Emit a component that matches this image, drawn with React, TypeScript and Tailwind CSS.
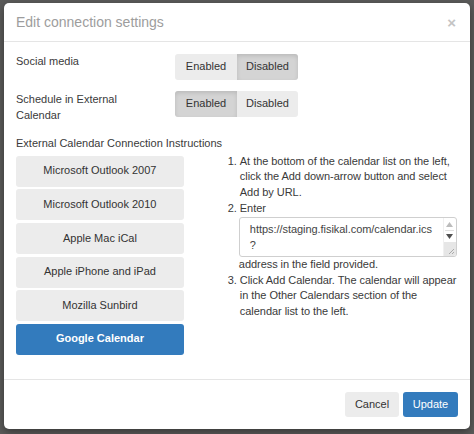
import React from 'react';

const calendars = [
  'Microsoft Outlook 2007',
  'Microsoft Outlook 2010',
  'Apple Mac iCal',
  'Apple iPhone and iPad',
  'Mozilla Sunbird',
];

const Toggle = ({ active }: { active: 'on' | 'off' }) => (
  <div className="flex h-[26px] text-[11px] text-[#333]">
    <div
      className={`w-[62px] flex items-center justify-center rounded-l-[3px] ${
        active === 'on' ? 'bg-[#d4d4d4] shadow-[inset_0_2px_4px_rgba(0,0,0,0.12)]' : 'bg-[#ececec]'
      }`}
    >
      Enabled
    </div>
    <div
      className={`w-[61px] flex items-center justify-center rounded-r-[3px] ${
        active === 'off' ? 'bg-[#d4d4d4] shadow-[inset_0_2px_4px_rgba(0,0,0,0.12)]' : 'bg-[#ececec]'
      }`}
    >
      Disabled
    </div>
  </div>
);

export default function App() {
  return (
    <div className="w-[474px] h-[434px] bg-[#5b5b5a] pt-[3px] px-[4px] font-['Liberation_Sans',Arial,sans-serif]">
      <div className="bg-white rounded-[5px] h-[426px] flex flex-col shadow-[0_3px_9px_rgba(0,0,0,0.4)]">
        {/* header */}
        <div className="h-[39px] pl-[12px] pr-[14px] flex items-center justify-between border-b border-[#e5e5e5]">
          <h4 className="text-[14px] text-[#9d9d9d] pt-[1px]">Edit connection settings</h4>
          <span className="text-[15px] font-bold text-[#c4c4c4] leading-none">×</span>
        </div>

        {/* body */}
        <div className="flex-1 px-[12px] pt-[12px] text-[11px] leading-[15.6px] text-[#3a3a3a]">
          <div className="flex items-start">
            <div className="w-[159px]">Social media</div>
            <Toggle active="off" />
          </div>
          <div className="flex items-start mt-[11px]">
            <div className="w-[159px] pt-[1px]">
              Schedule in External
              <br />
              Calendar
            </div>
            <Toggle active="on" />
          </div>

          <div className="mt-[13px]">External Calendar Connection Instructions</div>

          <div className="flex mt-[2px]">
            <div className="w-[170px] pt-[2px] flex flex-col gap-[2.6px]">
              {calendars.map((c) => (
                <div
                  key={c}
                  className="h-[31px] rounded-[3px] bg-[#ececec] flex items-center justify-center text-[#333]"
                >
                  {c}
                </div>
              ))}
              <div className="h-[31px] rounded-[3px] bg-[#337bbd] flex items-center justify-center text-white font-bold">
                Google Calendar
              </div>
            </div>

            <ol className="ml-[56px] w-[221px] list-decimal list-outside tracking-[-0.05px]">
              <li>At the bottom of the calendar list on the left, click the Add down-arrow button and select Add by URL.</li>
              <li>
                Enter
                <div className="-ml-[1px] mt-[1px] w-[218px] h-[40px] border border-[#cfcfcf] rounded-[3px] flex">
                  <div className="flex-1 pl-[10px] pt-[4px] text-[#444] overflow-hidden whitespace-nowrap">
                    <div>https://staging.fisikal.com/calendar.ics</div>
                    <div>?</div>
                    <div className="text-[#777]">&nbsp;&nbsp;auth_token=ZGI0MTMINzMx</div>
                  </div>
                  <div className="w-[13px] flex flex-col items-center border-l border-[#f0f0f0]">
                    <svg width="7" height="5" viewBox="0 0 7 5" className="mt-[4px]">
                      <path d="M0 5 L3.5 0 L7 5 Z" fill="#bcbcbc" />
                    </svg>
                    <div className="w-[9px] h-px bg-[#e0e0e0] mt-[3px]" />
                    <svg width="7" height="5" viewBox="0 0 7 5" className="mt-[3px]">
                      <path d="M0 0 L3.5 5 L7 0 Z" fill="#505050" />
                    </svg>
                    <div className="flex-1 w-full bg-[#e6e6e6] mt-[3px] rounded-br-[3px] relative">
                      <svg width="8" height="8" viewBox="0 0 8 8" className="absolute right-[1px] bottom-[1px]">
                        <path d="M7 2 L2 7 M7 5 L5 7" stroke="#9a9a9a" strokeWidth="0.8" />
                      </svg>
                    </div>
                  </div>
                </div>
                <div className="-ml-[1px]">address in the field provided.</div>
              </li>
              <li>Click Add Calendar. The calendar will appear in the Other Calendars section of the calendar list to the left.</li>
            </ol>
          </div>
        </div>

        {/* footer */}
        <div className="h-[50px] border-t border-[#e5e5e5] flex items-start justify-end gap-[4px] pt-[12px] pr-[12px] text-[11px]">
          <button className="w-[54px] h-[25px] rounded-[3px] bg-[#ececec] text-[#333]">Cancel</button>
          <button className="w-[55px] h-[25px] rounded-[3px] bg-[#337bbd] text-white">Update</button>
        </div>
      </div>
    </div>
  );
}
